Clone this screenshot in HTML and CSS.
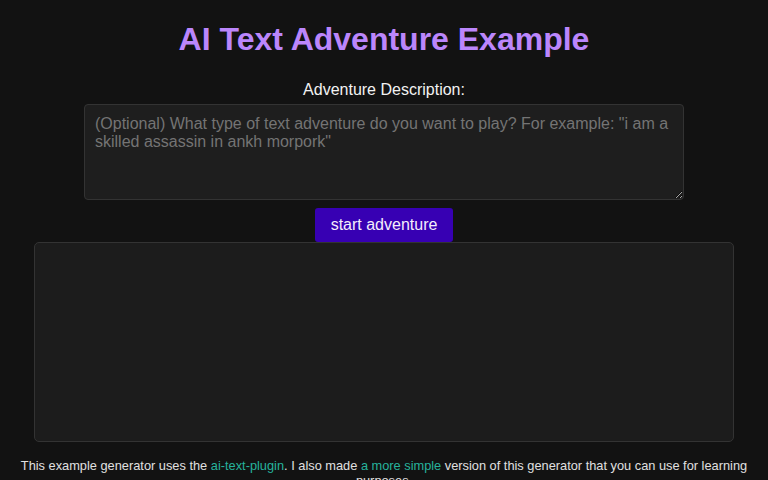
FILE: index.html
```html
<!DOCTYPE html>
<html lang="en">
<head>
    <meta charset="UTF-8">
    <meta name="viewport" content="width=device-width, initial-scale=1.0">
    <title>AI Text Adventure Example</title>
    <link rel="stylesheet" href="styles.css">
</head>
<body>
    <h1 class="title">AI Text Adventure Example</h1>
    <div class="setup">
        <label for="description" class="setup-label">Adventure Description:</label>
        <textarea id="description" class="description" placeholder="(Optional) What type of text adventure do you want to play? For example: &quot;i am a skilled assassin in ankh morpork&quot;"></textarea>
        <button class="start-btn">start adventure</button>
    </div>
    <div id="output" class="output"></div>
    <p class="footer">This example generator uses the <a href="#">ai-text-plugin</a>. I also made <a href="#">a more simple</a> version of this generator that you can use for learning purposes.</p>
</body>
</html>
```

FILE: styles.css
```css
body {
    font-family: "Liberation Sans", Arial, sans-serif;
    background-color: #121212;
    color: #e8e8e8;
    text-align: center;
    margin: 8px;
}
.title {
    color: #bb86fc;
    font-size: 32px;
    margin: 13px 0 23px;
}
.setup {
    display: flex;
    flex-direction: column;
    align-items: center;
}
.setup-label {
    font-size: 16px;
    margin-bottom: 5px;
    color: #f2f2f2;
}
.description {
    box-sizing: border-box;
    width: 600px;
    height: 96px;
    padding: 10px;
    font-family: "Liberation Sans", Arial, sans-serif;
    font-size: 16px;
    background-color: #1e1e1e;
    color: #e8e8e8;
    border: 1px solid #333;
    border-radius: 4px;
}
.description::placeholder {
    color: #747474;
}
.start-btn {
    margin-top: 8px;
    padding: 8px 16px;
    font-family: "Liberation Sans", Arial, sans-serif;
    font-size: 16px;
    background-color: #3700b3;
    color: #f4eefc;
    border: none;
    border-radius: 3px;
    cursor: pointer;
}
.output {
    box-sizing: border-box;
    width: 700px;
    height: 200px;
    margin: 0 auto;
    background-color: #1c1c1c;
    border: 1px solid #333;
    border-radius: 5px;
}
.footer {
    font-size: 12.8px;
    margin: 16px 0;
    color: #e0e0e0;
}
.footer a {
    color: #26b39c;
    text-decoration: none;
}
```
